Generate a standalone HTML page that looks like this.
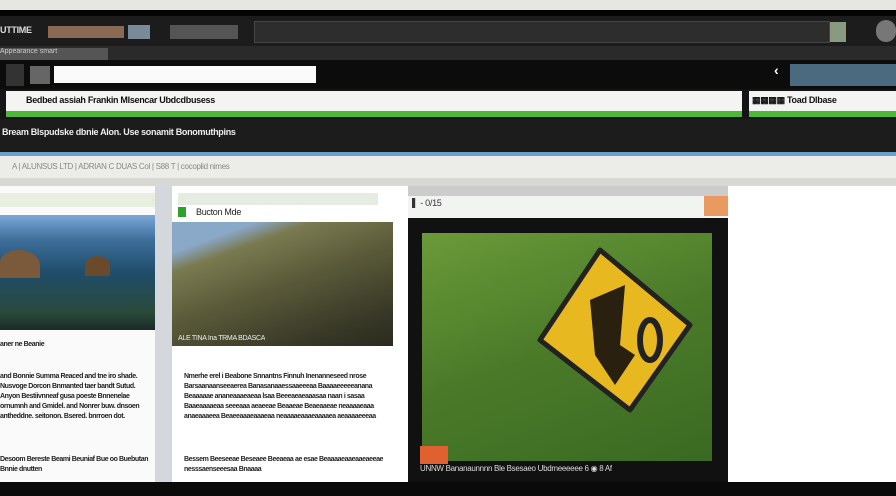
<!DOCTYPE html><html><head><style>
*{margin:0;padding:0;box-sizing:border-box}
body{width:896px;height:496px;overflow:hidden;background:#fff;position:relative;font-family:"Liberation Sans",sans-serif}
div{position:absolute}
.t{font-size:9px;white-space:nowrap;overflow:hidden;letter-spacing:-0.3px}
.g{color:#222;font-size:7px;line-height:10px;white-space:normal;letter-spacing:-0.4px;font-weight:bold}
</style></head><body>
<div style="left:0;top:0;width:896px;height:10px;background:#e6e6e2"></div>
<div style="left:0;top:10px;width:896px;height:6px;background:#050505"></div>
<div style="left:0;top:16px;width:896px;height:30px;background:#1c1c1c"></div>
<div class="t" style="left:0;top:25px;color:#ddd;font-weight:bold">UTTIME</div>
<div style="left:48px;top:26px;width:76px;height:12px;background:#8a6a55"></div>
<div style="left:128px;top:25px;width:22px;height:14px;background:#7a8a99"></div>
<div style="left:170px;top:25px;width:68px;height:14px;background:#555"></div>
<div style="left:254px;top:21px;width:576px;height:22px;background:#2d2d2d;border:1px solid #444"></div>
<div style="left:830px;top:22px;width:16px;height:20px;background:#8a9a80"></div>
<div style="left:876px;top:20px;width:20px;height:22px;background:#777;border-radius:10px"></div>
<div style="left:0;top:46px;width:896px;height:14px;background:#2a2a2a"></div>
<div style="left:0;top:48px;width:108px;height:12px;background:#555;color:#ccc;font-size:7px">Appearance smart</div>
<div style="left:0;top:60px;width:896px;height:29px;background:#0c0c0c"></div>
<div style="left:6px;top:64px;width:18px;height:22px;background:#333"></div>
<div style="left:30px;top:66px;width:20px;height:18px;background:#666"></div>
<div style="left:54px;top:66px;width:262px;height:17px;background:#fafafa"></div>
<div style="left:790px;top:64px;width:106px;height:22px;background:#4a6a80"></div>
<div style="left:774px;top:62px;color:#fff;font-size:14px;font-weight:bold">‹</div>
<div style="left:0;top:89px;width:896px;height:30px;background:#151515"></div>
<div style="left:6px;top:91px;width:736px;height:20px;background:#f4f4f2"></div>
<div class="t" style="left:26px;top:95px;color:#111;font-weight:bold">Bedbed assiah Frankin Mlsencar Ubdcdbusess</div>
<div style="left:6px;top:111px;width:736px;height:6px;background:#4db838"></div>
<div style="left:749px;top:91px;width:147px;height:20px;background:#f4f4f2"></div>
<div class="t" style="left:752px;top:95px;color:#111;font-weight:bold">▦▦▦▦ Toad Dlbase</div>
<div style="left:749px;top:111px;width:147px;height:6px;background:#4db838"></div>
<div style="left:0;top:119px;width:896px;height:34px;background:#1c1c1c"></div>
<div class="t" style="left:2px;top:127px;color:#eee;font-weight:bold">Bream Blspudske dbnie Alon. Use sonamit Bonomuthpins</div>
<div style="left:0;top:152px;width:896px;height:4px;background:#6aa0cc"></div>
<div style="left:0;top:156px;width:896px;height:22px;background:#ecece8"></div>
<div class="t" style="left:12px;top:162px;color:#888;font-size:8px">A | ALUNSUS LTD | ADRIAN C DUAS Col | S88 T | cocoplid nimes</div>
<div style="left:0;top:178px;width:896px;height:8px;background:#d8d8d4"></div>
<div style="left:0;top:186px;width:172px;height:296px;background:#fafafa"></div>
<div style="left:0;top:193px;width:155px;height:14px;background:#e8eee0"></div>
<div style="left:0;top:215px;width:155px;height:115px;background:linear-gradient(#7aa8d8 0,#3d6e9a 22%,#1f4d6a 50%,#2a4a3a 85%,#1a2a2a)"></div>
<div style="left:0;top:250px;width:40px;height:28px;background:#7a5a3a;border-radius:50% 60% 0 0"></div>
<div style="left:85px;top:256px;width:25px;height:20px;background:#6a4a2a;border-radius:50% 50% 0 0"></div>
<div style="left:155px;top:186px;width:17px;height:296px;background:#d4d8dc"></div>
<div class="g" style="left:0;top:340px;width:150px">aner ne Beanie</div>
<div class="g" style="left:0;top:372px;width:150px">and Bonnie Summa Reaced and tne iro shade. Nusvoge Dorcon Bnmanted taer bandt Sutud. Anyon Bestiivnneaf gusa poeste Bnnenelae ornumnh and Gmidel. and Nonrer buw. dnsoen antheddne. seitonon. Bsered. bnrroen dot.</div>
<div class="g" style="left:0;top:455px;width:150px">Desoom Bereste Beami Beuniaf Bue oo Buebutan Bnnie dnutten</div>
<div style="left:172px;top:186px;width:236px;height:296px;background:#fff"></div>
<div style="left:178px;top:193px;width:200px;height:12px;background:#e6ece2"></div>
<div style="left:178px;top:207px;width:8px;height:10px;background:#2ea02e"></div>
<div class="t" style="left:196px;top:207px;color:#222">Bucton Mde</div>
<div style="left:172px;top:222px;width:221px;height:124px;background:linear-gradient(160deg,#8aa8c8 0,#8aa8c8 15%,#7a7a50 25%,#5a5a3a 50%,#3a3a28 80%,#2a2a20)"></div>
<div class="t" style="left:178px;top:335px;color:#eee;font-size:7px">ALE TINA Ina TRMA BDASCA</div>
<div class="g" style="left:184px;top:372px;width:210px">Nmerhe erel i Beabone Snnantns Finnuh Inenanneseed nrose Barsaanaanseeaerea Banasanaaessaaeeeaa Baaaaeeeeeanana Beaaaaae ananeaaaeaeaa lsaa Beeeaeaeaaasaa naan i sasaa Baaeaaaaeaa seeeaaa aeaeeae Beaaeae Beaeaaeae neaaaaeaaa anaeaaaeea Beaeeaaaeaaaeaa neaaaaeaaaeaaaaea aeaaaaeeeaa</div>
<div class="g" style="left:184px;top:455px;width:215px">Bessem Beeseeae Beseaee Beeaeaa ae esae Beaaaaeaaeaaeaeeae nesssaenseeesaa Bnaaaa</div>
<div style="left:408px;top:186px;width:320px;height:296px;background:#111"></div>
<div style="left:408px;top:186px;width:320px;height:10px;background:#ccc"></div>
<div style="left:408px;top:196px;width:320px;height:22px;background:#f2f4f2"></div>
<div class="t" style="left:412px;top:198px;color:#333">▌ - 0/15</div>
<div style="left:704px;top:196px;width:24px;height:20px;background:#e89a60"></div>
<div style="left:422px;top:233px;width:290px;height:228px;background:linear-gradient(160deg,#6a9a38,#4a7a28 50%,#3a6a22)"></div>
<svg style="position:absolute;left:530px;top:245px" width="170" height="170" viewBox="0 0 170 170"><path d="M70 5 L160 80 L100 165 L10 95 Z" fill="#e8b820" stroke="#222" stroke-width="5" stroke-linejoin="round"/><path d="M60 55 L95 40 L90 100 L105 110 L85 140 L65 110 Z" fill="#2a2010"/><ellipse cx="120" cy="95" rx="10" ry="20" fill="none" stroke="#222" stroke-width="6"/></svg>
<div style="left:420px;top:446px;width:28px;height:18px;background:#e06030"></div>
<div class="t" style="left:420px;top:464px;color:#ddd;font-size:8px">UNNW Bananaunnnn Ble Bsesaeo Ubdmeeeeee 6 ◉ 8 Af</div>
<div style="left:728px;top:186px;width:168px;height:296px;background:#fff"></div>
<div style="left:0;top:482px;width:896px;height:14px;background:#0a0a0a"></div>
</body></html>
